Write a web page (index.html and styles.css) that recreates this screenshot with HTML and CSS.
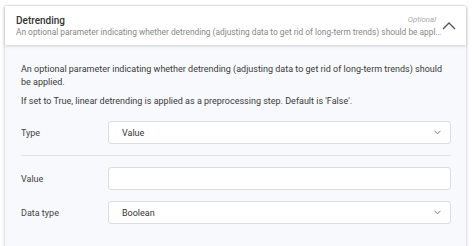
FILE: index.html
```html
<!DOCTYPE html>
<html lang="en">
  <head>
    <meta charset="UTF-8" />
    <meta name="viewport" content="width=device-width, initial-scale=1.0" />
    <title>Detrending</title>
    <link rel="stylesheet" href="styles.css">
  </head>
  <body>
    <div class="card">
      <div class="card-header">
        <div class="head-text">
          <div class="title">Detrending</div>
          <div class="subtitle">An optional parameter indicating whether detrending (adjusting data to get rid of long-term trends) should be appl…</div>
        </div>
        <div class="optional">Optional</div>
        <svg class="toggle" width="14" height="8" viewBox="0 0 14 8">
          <path d="M1 7 L7 1 L13 7" fill="none" stroke="#555" stroke-width="1.4" />
        </svg>
      </div>
      <div class="card-body">
        <p class="desc">An optional parameter indicating whether detrending (adjusting data to get rid of long-term trends) should be applied.</p>
        <p class="desc second">If set to True, linear detrending is applied as a preprocessing step. Default is 'False'.</p>
        <div class="row">
          <label>Type</label>
          <div class="field select">
            <span>Value</span>
            <svg width="7" height="5" viewBox="0 0 7 5"><path d="M0.5 0.8 L3.5 3.8 L6.5 0.8" fill="none" stroke="#777" stroke-width="1" /></svg>
          </div>
        </div>
        <div class="divider"></div>
        <div class="row">
          <label>Value</label>
          <div class="field"></div>
        </div>
        <div class="row">
          <label>Data type</label>
          <div class="field select">
            <span>Boolean</span>
            <svg width="7" height="5" viewBox="0 0 7 5"><path d="M0.5 0.8 L3.5 3.8 L6.5 0.8" fill="none" stroke="#777" stroke-width="1" /></svg>
          </div>
        </div>
      </div>
    </div>
  </body>
</html>
```

FILE: styles.css
```css
body {
  margin: 0;
  font-family: Roboto, "Liberation Sans", Arial, sans-serif;
  background: white;
  color: #333;
}
.card {
  margin: 5px 0 0 4px;
  width: 461px;
  border: 1px solid #e4e6ea;
  border-radius: 3px;
  box-shadow: 0 1px 3px rgba(0, 0, 0, 0.15);
  background: #f8f9fc;
}
.card-header {
  display: flex;
  align-items: center;
  height: 39px;
  padding: 0 10px 0 11px;
  background: white;
  box-shadow: 0 1px 3px rgba(0, 0, 0, 0.18);
  position: relative;
}
.head-text {
  flex: 1;
  min-width: 0;
}
.title {
  font-size: 10px;
  font-weight: 500;
  color: #333;
  line-height: 13px;
}
.subtitle {
  font-size: 8.35px;
  color: #888;
  line-height: 11px;
  white-space: nowrap;
}
.optional {
  align-self: flex-start;
  margin-top: 9px;
  margin-left: -30px;
  font-size: 7.8px;
  font-style: italic;
  color: #aaa;
}
.toggle {
  margin-left: 6px;
  flex: none;
}
.card-body {
  padding: 18px 15px 19px 16px;
}
.desc {
  margin: 0;
  font-size: 9px;
  line-height: 13px;
  color: #3a3a3a;
}
.second {
  margin-top: 6px;
  margin-bottom: 13px;
}
.row {
  display: flex;
  align-items: center;
  margin-bottom: 11px;
}
.row label {
  width: 87px;
  font-size: 9px;
  color: #444;
}
.field {
  flex: 1;
  height: 21px;
  border: 1px solid #dcdde0;
  border-radius: 3px;
  background: white;
  display: flex;
  align-items: center;
  padding: 0 9px 0 13px;
  font-size: 9px;
  color: #333;
}
.select span {
  flex: 1;
}
.divider {
  height: 1px;
  background: #e2e3e6;
  margin: 0 0 11px 0;
}
```
